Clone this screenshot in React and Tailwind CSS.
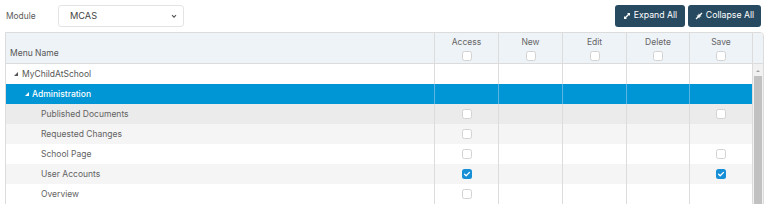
import React from "react";

const FONT = { fontFamily: "Inter, 'Noto Sans', sans-serif" };

function Box({ checked }) {
  if (checked) {
    return (
      <span className="flex h-[10px] w-[10px] items-center justify-center rounded-[2.5px] bg-[#168fd7]">
        <svg width="8" height="8" viewBox="0 0 8 8">
          <path d="M1.6 4.2 L3.2 5.7 L6.5 2.4" fill="none" stroke="#fff" strokeWidth="1.3" strokeLinecap="round" strokeLinejoin="round" />
        </svg>
      </span>
    );
  }
  return <span className="block h-[10px] w-[10px] rounded-[2.5px] border border-[#d2d2d2] bg-white" />;
}

function Tri({ color }) {
  return (
    <svg width="4" height="4" viewBox="0 0 4 4" className="shrink-0">
      <path d="M4 0 L4 4 L0 4 Z" fill={color} />
    </svg>
  );
}

function ExpandIcon() {
  return (
    <svg width="8" height="8" viewBox="0 0 8 8" className="shrink-0">
      <path d="M2 6 L6 2" stroke="#fff" strokeWidth="1.2" />
      <path d="M4 1 L7 1 L7 4 Z" fill="#fff" />
      <path d="M1 4 L1 7 L4 7 Z" fill="#fff" />
    </svg>
  );
}

function CollapseIcon() {
  return (
    <svg width="8" height="8" viewBox="0 0 8 8" className="shrink-0">
      <path d="M1 7 L7 1" stroke="#fff" strokeWidth="1.2" />
      <path d="M3.5 1.5 L6.5 4.5 L3.5 4.5 Z" fill="#fff" />
      <path d="M1.5 3.5 L4.5 3.5 L4.5 6.5 Z" fill="#fff" />
    </svg>
  );
}

const cols = "grid grid-cols-[428px_64px_64px_64px_63px_63px]";

const rows = [
  { name: "MyChildAtSchool", level: 0, bg: "bg-white", boxes: [null, null, null, null, null] },
  { name: "Administration", level: 1, bg: "bg-[#0096d6]", sel: true, boxes: [null, null, null, null, null] },
  { name: "Published Documents", level: 2, bg: "bg-[#ebebeb]", boxes: [false, null, null, null, false] },
  { name: "Requested Changes", level: 2, bg: "bg-[#f5f5f5]", boxes: [false, null, null, null, null] },
  { name: "School Page", level: 2, bg: "bg-white", boxes: [false, null, null, null, false] },
  { name: "User Accounts", level: 2, bg: "bg-[#f5f5f5]", boxes: [true, null, null, null, true] },
  { name: "Overview", level: 2, bg: "bg-white", boxes: [false, null, null, null, null] },
];

export default function App() {
  return (
    <div style={FONT} className="h-[204px] w-[768px] overflow-hidden bg-white text-[8.5px] text-[#636363]">
      <div className="flex h-[32px] items-center justify-between pl-[6px] pr-[7px]">
        <div className="flex items-center">
          <span className="w-[52px] text-[8.4px] text-[#5a5a5a]">Module</span>
          <div className="flex h-[22px] w-[126px] items-center justify-between rounded-[3px] border border-[#e4e4e4] bg-white pl-[11px] pr-[5px] text-[9.2px] text-[#444]">
            <span>MCAS</span>
            <svg width="8" height="8" viewBox="0 0 8 8">
              <path d="M2 3.2 L4 5.2 L6 3.2" fill="none" stroke="#555" strokeWidth="1.1" />
            </svg>
          </div>
        </div>
        <div className="flex items-center gap-[3px]">
          <button className="flex h-[22px] w-[70px] items-center justify-center gap-[3px] rounded-[3px] bg-[#284a60] text-[8.7px] text-white">
            <ExpandIcon />
            <span>Expand All</span>
          </button>
          <button className="flex h-[22px] w-[73px] items-center justify-center gap-[3px] rounded-[3px] bg-[#284a60] text-[8.7px] text-white">
            <CollapseIcon />
            <span>Collapse All</span>
          </button>
        </div>
      </div>

      <div className="ml-[5px] w-[759px] rounded-tr-[4px] border border-[#dcdcdc]">
        <div className="flex h-[31px] rounded-tr-[4px] border-b border-[#dcdcdc] bg-[#eef3f8]">
          <div className={cols}>
            <div className="flex items-end pb-[4px] pl-[4px] leading-[12px] text-[#555]">Menu Name</div>
            {["Access", "New", "Edit", "Delete", "Save"].map((h) => (
              <div key={h} className="flex flex-col items-center border-l border-[#dcdcdc] pt-[3px]">
                <span className="leading-[12px] text-[#666]">{h}</span>
                <span className="mt-[3px]">
                  <Box checked={false} />
                </span>
              </div>
            ))}
          </div>
          <div className="w-[11px] border-l border-[#dcdcdc]" />
        </div>

        <div className="flex">
          <div>
            {rows.map((r) => (
              <div key={r.name} className={`${cols} h-[20px] ${r.bg}`}>
                <div
                  className={`flex items-center ${
                    r.level === 0
                      ? "gap-[4px] pl-[8px] text-[#555]"
                      : r.level === 1
                      ? "gap-[3px] pl-[19px] font-medium text-white"
                      : "pl-[35px]"
                  }`}
                >
                  {r.level === 0 && <Tri color="#555" />}
                  {r.level === 1 && <Tri color="#fff" />}
                  <span>{r.name}</span>
                </div>
                {r.boxes.map((b, i) => (
                  <div key={i} className={`flex items-center justify-center border-l ${r.sel ? "border-[#5ab3e0]" : "border-[#dcdcdc]"}`}>
                    {b !== null && <Box checked={b} />}
                  </div>
                ))}
              </div>
            ))}
          </div>
          <div className="flex w-[11px] flex-col items-center border-l border-[#dcdcdc] bg-[#f1f1f1]">
            <svg width="6" height="10" viewBox="0 0 6 10" className="mt-[2px]">
              <path d="M1 6 L3 4 L5 6 Z" fill="#a3a3a3" />
            </svg>
            <div className="w-[8px] flex-1 bg-[#c1c1c1]" />
          </div>
        </div>
      </div>
    </div>
  );
}
